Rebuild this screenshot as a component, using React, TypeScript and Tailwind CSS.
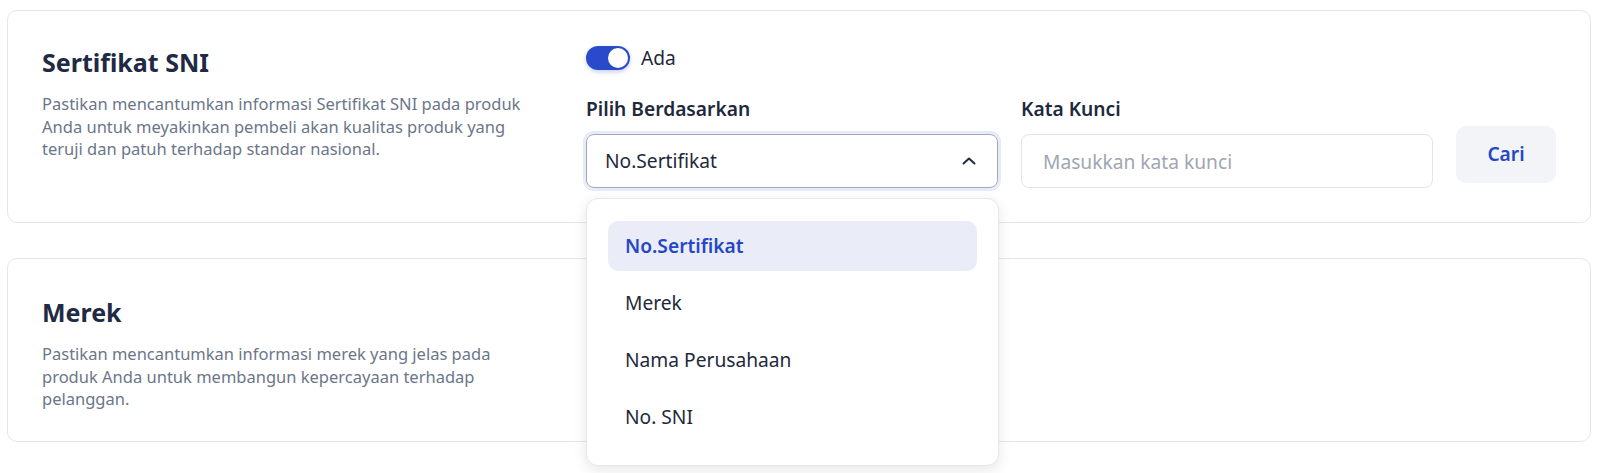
import { useState } from "react";

const options = ["No.Sertifikat", "Merek", "Nama Perusahaan", "No. SNI"];

function Toggle({ on }: { on: boolean }) {
  return (
    <button
      type="button"
      className={`flex h-[24px] w-[44px] items-center rounded-full p-[2px] shadow-[0_2px_4px_rgba(37,64,180,0.25)] ${
        on ? "justify-end bg-[#2b4acb]" : "justify-start bg-[#d1d5db]"
      }`}
    >
      <span className="h-[20px] w-[20px] rounded-full bg-white" />
    </button>
  );
}

function ChevronUp() {
  return (
    <svg width="14" height="8" viewBox="0 0 14 8" fill="none">
      <path d="M1.5 6.5L7 1.5L12.5 6.5" stroke="#1f2a44" strokeWidth="2" strokeLinecap="round" strokeLinejoin="round" />
    </svg>
  );
}

export default function App() {
  const [selected] = useState("No.Sertifikat");

  return (
    <div className="min-h-screen bg-white pl-[7px] pr-[9px] pt-[10px] font-['Noto_Sans',sans-serif] text-[#1e293b]">
      <div className="flex flex-col gap-[35px]">
        {/* Sertifikat SNI */}
        <div className="flex rounded-[10px] border border-[#e5e7eb] pb-[34px] pl-[34px] pr-[34px] pt-[35px]">
          <div className="w-[544px] shrink-0">
            <h2 className="text-[25px] font-bold leading-[32px] text-[#1f2a44]">Sertifikat SNI</h2>
            <p className="mt-[15px] max-w-[490px] text-[16.5px] leading-[22.5px] text-[#6b7689]">
              Pastikan mencantumkan informasi Sertifikat SNI pada produk Anda untuk meyakinkan pembeli akan kualitas produk yang teruji dan patuh terhadap standar nasional.
            </p>
          </div>

          <div className="flex-1">
            <div className="flex items-center gap-[11px]">
              <Toggle on />
              <span className="text-[19.2px] leading-[24px] text-[#1e293b]">Ada</span>
            </div>

            <div className="mt-[26px] grid grid-cols-[1fr_1fr_100px] items-start gap-[23px]">
              <div className="relative">
                <label className="block text-[19.2px] font-semibold leading-[26px] text-[#1e293b]">Pilih Berdasarkan</label>
                <div className="mt-[12px] flex h-[54px] items-center justify-between rounded-[8px] border border-[#a3a9b6] pl-[18px] pr-[21px] ring-[3px] ring-[#e6eaf9]">
                  <span className="text-[19.2px]">{selected}</span>
                  <ChevronUp />
                </div>

                <div className="absolute left-0 top-[102px] z-10 w-[413px] rounded-[12px] border border-[#e5e7eb] bg-white px-[21px] pb-[23px] pt-[22px] shadow-[0_4px_14px_rgba(15,23,42,0.10)]">
                  <ul className="flex flex-col gap-[7px]">
                    {options.map((o) => (
                      <li
                        key={o}
                        className={`flex h-[50px] items-center rounded-[10px] px-[17px] text-[19.2px] ${
                          o === selected ? "bg-[#eaedf8] font-semibold text-[#2547c6]" : "text-[#1e293b]"
                        }`}
                      >
                        {o}
                      </li>
                    ))}
                  </ul>
                </div>
              </div>

              <div>
                <label className="block text-[19.2px] font-semibold leading-[26px] text-[#1e293b]">Kata Kunci</label>
                <input
                  placeholder="Masukkan kata kunci"
                  className="mt-[12px] h-[54px] w-full rounded-[8px] border border-[#e2e4ea] pl-[21px] text-[19.2px] outline-none placeholder:text-[#a0a6b2]"
                />
              </div>

              <button
                type="button"
                className="mt-[30px] h-[57px] rounded-[10px] bg-[#f3f4f8] text-[19.2px] font-semibold text-[#2547c6]"
              >
                Cari
              </button>
            </div>
          </div>
        </div>

        {/* Merek */}
        <div className="rounded-[10px] border border-[#e5e7eb] px-[34px] pb-[30px] pt-[37px]">
          <h2 className="text-[25px] font-bold leading-[32px] text-[#1f2a44]">Merek</h2>
          <p className="mt-[15px] max-w-[480px] text-[16.5px] leading-[22.5px] text-[#6b7689]">
            Pastikan mencantumkan informasi merek yang jelas pada produk Anda untuk membangun kepercayaan terhadap pelanggan.
          </p>
        </div>
      </div>
    </div>
  );
}
